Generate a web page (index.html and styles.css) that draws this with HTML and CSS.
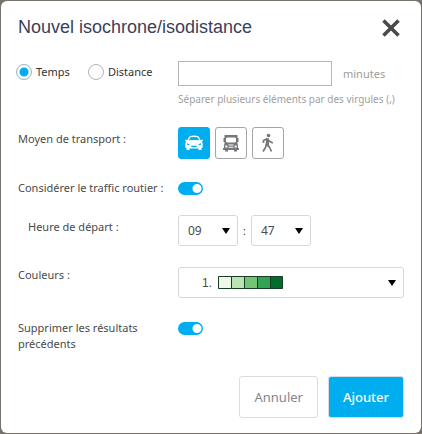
FILE: index.html
```html
<!DOCTYPE html>
<html lang="fr">
<head>
<meta charset="utf-8">
<meta name="viewport" content="width=device-width, initial-scale=1">
<title>Nouvel isochrone/isodistance</title>
<link rel="stylesheet" href="styles.css">
</head>
<body>
<form class="dialog" role="dialog" aria-labelledby="title">
  <header class="header">
    <h1 class="title" id="title">Nouvel isochrone/isodistance</h1>
    <button class="close" type="button" aria-label="Fermer">
      <svg width="18" height="18" viewBox="0 0 18 18"><path d="M1.500 1.500 16.500 16.500M16.500 1.500 1.500 16.500" stroke="#4a4a4a" stroke-width="3.600"/></svg>
    </button>
  </header>

  <div class="row row-mode">
    <div class="modes">
      <label class="mode"><input class="radio" type="radio" name="mode" checked>Temps</label>
      <label class="mode"><input class="radio" type="radio" name="mode">Distance</label>
    </div>
    <div>
      <div class="values">
        <input class="text" type="text" id="values" aria-label="Valeurs" aria-describedby="hint">
        <label class="unit" for="values">minutes</label>
      </div>
      <p class="hint" id="hint">Séparer plusieurs éléments par des virgules (,)</p>
    </div>
  </div>

  <div class="row row-transport">
    <span class="label label-low" id="transport">Moyen de transport :</span>
    <div class="transports" role="group" aria-labelledby="transport">
      <button class="transport selected" type="button" aria-label="Voiture" aria-pressed="true">
        <svg width="20" height="18" viewBox="0 0 20 18"><path fill="#fff" fill-rule="evenodd" d="M6 2Q10 .8 14 2 15.300 3 16.600 6.200L18.500 5.600 19 7 17.700 7.600Q18.700 8.500 18.700 10.300V13.500L17.500 14V16H14.500V14.500H5.500V16H2.500V14L1.300 13.500V10.300Q1.300 8.500 2.300 7.600L1 7 1.500 5.600 3.400 6.200Q4.700 3 6 2ZM6.500 3.300Q5.600 4.200 4.900 6.300 10 5.500 15.100 6.300 14.400 4.200 13.500 3.300 10 2.500 6.500 3.300ZM3 9.200V10.700L6 11.300Q5.500 9.500 3 9.200ZM17 9.200Q14.500 9.500 14 11.300L17 10.700ZM6.800 11.800 7.600 12.900H12.400L13.200 11.800Z"/></svg>
      </button>
      <button class="transport" type="button" aria-label="Camion" aria-pressed="false">
        <svg width="18" height="18" viewBox="0 0 18 18"><path fill="#76767b" fill-rule="evenodd" d="M2.500 1H15.500V4H16.500V8H15.500V10L16 11V14H17V16H15V17.500H12V16H6V17.500H3V16H1V14H2V11L2.500 10V8H1.500V4H2.500ZM5 3.500 4 4.500V7.500L5 8.500H13L14 7.500V4.500L13 3.500ZM3.300 11.500V13.500H5.300V11.500ZM12.700 11.500V13.500H14.700V11.500ZM6.500 10.500V11.500H11.500V10.500ZM6.500 12.800V13.800H11.500V12.800Z"/></svg>
      </button>
      <button class="transport" type="button" aria-label="Piéton" aria-pressed="false">
        <svg width="14" height="20" viewBox="0 0 14 20"><circle cx="7.500" cy="2.500" r="1.800" fill="#76767b"/><path fill="none" stroke="#76767b" stroke-width="1.700" stroke-linejoin="round" d="M2.500 10V7.500L6.200 5.800 8.500 8.300 11.800 10M6.200 5.800 5.600 11.500 8.400 14 10.500 18.500M5.300 11.500 4.500 14.500 2 18.500"/><path fill="#76767b" d="M5 5.500 8 5.500 8 12H4.800Z"/></svg>
      </button>
    </div>
  </div>

  <div class="row row-traffic">
    <label class="label" for="traffic">Considérer le traffic routier :</label>
    <input class="toggle" type="checkbox" role="switch" id="traffic" checked>
  </div>

  <div class="row row-time">
    <label class="label label-sub" for="hour">Heure de départ :</label>
    <div class="time">
      <span class="select-box"><select class="select" id="hour"><option>09</option></select><svg class="arrow" width="8" height="6" viewBox="0 0 8 6"><path d="M0 0H8L4 6Z"/></svg></span>
      <span class="colon">:</span>
      <span class="select-box"><select class="select" aria-label="Minutes"><option>47</option></select><svg class="arrow" width="8" height="6" viewBox="0 0 8 6"><path d="M0 0H8L4 6Z"/></svg></span>
    </div>
  </div>

  <div class="row row-colors">
    <label class="label" for="colors">Couleurs :</label>
    <span class="select-box">
      <select class="select select-colors" id="colors"><option>1.</option></select>
      <svg class="swatches" width="65" height="13" viewBox="0 0 65 13" stroke="#1b3a25">
        <path fill="#edf8e9" d="M.5 .5H13.500V12.500H.5Z"/><path fill="#bae4b3" d="M13.500 .5H26.500V12.500H13.500Z"/><path fill="#74c476" d="M26.500 .5H39.500V12.500H26.500Z"/><path fill="#31a354" d="M39.500 .5H52.500V12.500H39.500Z"/><path fill="#006d2c" d="M52.500 .5H64.500V12.500H52.500Z"/>
      </svg>
      <svg class="arrow" width="8" height="6" viewBox="0 0 8 6"><path d="M0 0H8L4 6Z"/></svg>
    </span>
  </div>

  <div class="row row-clear">
    <label class="label" for="clear">Supprimer les résultats précédents</label>
    <input class="toggle" type="checkbox" role="switch" id="clear" checked>
  </div>

  <footer class="footer">
    <button class="action" type="button">Annuler</button>
    <button class="action primary" type="submit">Ajouter</button>
  </footer>
</form>
</body>
</html>
```
FILE: styles.css
```css
* { box-sizing: border-box; }

body {
  margin: 0;
  padding: 1px;
  background: #77736c;
  color: #4a4a4a;
  font: 11px/16px "Noto Sans", "Open Sans", sans-serif;
}

button, input, select { margin: 0; font: inherit; color: inherit; }

.dialog {
  padding: 16px 17px 15px;
  border-radius: 6px;
  background: #fff;
}

.header {
  display: flex;
  align-items: center;
  justify-content: space-between;
  padding-right: 4px;
  margin-bottom: 23px;
}

.title {
  margin: 0;
  color: #3c3f58;
  font: 18px/21px "Liberation Sans", sans-serif;
}

.close { display: flex; padding: 0; border: 0; background: none; }

.row {
  display: grid;
  grid-template-columns: 160px 1fr;
  align-items: start;
}

.modes { display: flex; gap: 18px; padding-top: 3px; margin-left: -2px; }
.mode { display: flex; align-items: center; gap: 4px; color: #333; }

.radio {
  appearance: none;
  width: 16px;
  height: 16px;
  border: 1px solid #b5b5b5;
  border-radius: 50%;
}
.radio:checked {
  border-color: #8fb4c4;
  background: radial-gradient(circle, #00aef0 4px, #fff 5px);
}

.values { display: flex; align-items: center; gap: 11px; }
.text { width: 154px; height: 25px; padding: 0 6px; border: 1px solid #b5b5b5; background: #fff; }
.unit { color: #9c9c9c; }
.hint { margin: 5px 0 0; color: #a0a0a0; font-size: 10px; }

.label { color: #4a4a4a; }
.label-low { padding-top: 4px; }
.label-sub { padding: 4px 0 0 10px; }

.row-transport { margin-top: 20px; }
.transports { display: flex; gap: 5px; }
.transport {
  display: flex;
  align-items: center;
  justify-content: center;
  width: 32px;
  height: 32px;
  padding: 0;
  border: 1px solid #a5a5a8;
  border-radius: 3px;
  background: #fff;
}
.transport.selected { border-color: #00aef0; background: #00aef0; }

.row-traffic { margin-top: 21px; }
.toggle {
  appearance: none;
  width: 25px;
  height: 13px;
  margin-top: 2px;
  border-radius: 7px;
  background: #b5b5b5 radial-gradient(circle at 6px 50%, #fff 4px, transparent 5px);
}
.toggle:checked {
  background: #00aef0 radial-gradient(circle at 19px 50%, #fff 4px, transparent 5px);
}

.row-time { margin-top: 19px; }
.time { display: flex; align-items: center; }
.time .select { width: 60px; }
.colon { width: 13px; text-align: center; }

.select-box { display: grid; align-items: center; }
.select-box > * { grid-area: 1 / 1; }
.select {
  appearance: none;
  width: 100%;
  height: 31px;
  padding: 0 9px;
  border: 1px solid #d7d7dc;
  border-radius: 3px;
  background: #fff;
  font-size: 12px;
}
.select-colors { padding-left: 23px; font-family: "Liberation Sans", sans-serif; }
.arrow { justify-self: end; margin-right: 8px; pointer-events: none; }
.swatches { margin-left: 40px; pointer-events: none; }

.row-colors { margin-top: 21px; }
.row-clear { margin-top: 22px; }
.row-clear .label { padding-right: 20px; }

.footer { display: flex; justify-content: flex-end; gap: 10px; margin-top: 24px; }
.action {
  height: 42px;
  padding: 0 14px;
  border: 1px solid #dcdcdc;
  border-radius: 3px;
  background: #fff;
  color: #85858a;
  font-size: 13px;
}
.action.primary { background: #00aef0; color: #fff; font-weight: 500; }
```
